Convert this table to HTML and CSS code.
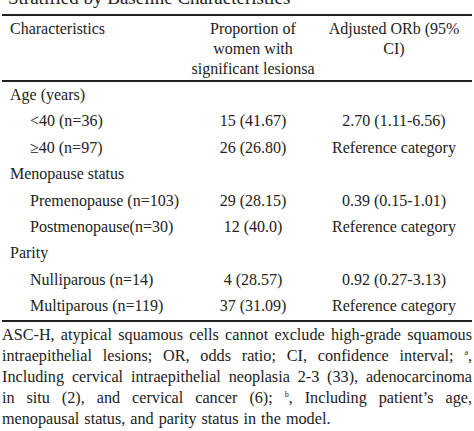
FILE: index.html
```html
<!DOCTYPE html>
<html>
<head>
<meta charset="utf-8">
<link rel="stylesheet" href="styles.css">
</head>
<body>
<div class="page">
  <div class="title">Stratified by Baseline Characteristics</div>
  <table class="tbl">
    <thead>
      <tr>
        <th class="c1">Characteristics</th>
        <th class="c2">Proportion of<br>women with<br>significant lesionsa</th>
        <th class="c3">Adjusted ORb (95%<br>CI)</th>
      </tr>
    </thead>
    <tbody>
      <tr><td class="c1">Age (years)</td><td></td><td></td></tr>
      <tr><td class="c1 ind">&lt;40 (n=36)</td><td class="c2">15 (41.67)</td><td class="c3">2.70 (1.11-6.56)</td></tr>
      <tr><td class="c1 ind">≥40 (n=97)</td><td class="c2">26 (26.80)</td><td class="c3">Reference category</td></tr>
      <tr><td class="c1">Menopause status</td><td></td><td></td></tr>
      <tr><td class="c1 ind">Premenopause (n=103)</td><td class="c2">29 (28.15)</td><td class="c3">0.39 (0.15-1.01)</td></tr>
      <tr><td class="c1 ind">Postmenopause(n=30)</td><td class="c2">12 (40.0)</td><td class="c3">Reference category</td></tr>
      <tr><td class="c1">Parity</td><td></td><td></td></tr>
      <tr><td class="c1 ind">Nulliparous (n=14)</td><td class="c2">4 (28.57)</td><td class="c3">0.92 (0.27-3.13)</td></tr>
      <tr><td class="c1 ind">Multiparous (n=119)</td><td class="c2">37 (31.09)</td><td class="c3">Reference category</td></tr>
    </tbody>
  </table>
  <p class="note">ASC-H, atypical squamous cells cannot exclude high-grade squamous intraepithelial lesions; OR, odds ratio; CI, confidence interval; <sup>a</sup>, Including cervical intraepithelial neoplasia 2-3 (33), adenocarcinoma in&nbsp;situ (2), and cervical cancer (6); <sup>b</sup>, Including patient’s age, menopausal status, and parity status in the model.</p>
</div>
</body>
</html>
```
FILE: styles.css
```css
html, body {
  margin: 0;
  padding: 0;
  background: #fff;
}
body {
  font-family: "Liberation Serif", "Times New Roman", serif;
  color: #222;
  width: 474px;
  height: 431px;
  overflow: hidden;
}
.page {
  padding: 0 2px;
}
.title {
  font-size: 19px;
  line-height: 20px;
  margin-top: -12px;
  padding-left: 6px;
  height: 26px;
  white-space: nowrap;
}
.tbl {
  width: 470px;
  table-layout: fixed;
  border-collapse: collapse;
  font-size: 16px;
  border-top: 2px solid #222;
  border-bottom: 2px solid #222;
}
.tbl th {
  font-weight: normal;
  line-height: 20px;
  padding: 3px 0 1px;
  vertical-align: top;
  border-bottom: 2px solid #222;
  white-space: nowrap;
}
.tbl td {
  line-height: 20.4px;
  padding: 3px 0 3px;
  white-space: nowrap;
}
.c1 {
  text-align: left;
  padding-left: 8px !important;
  width: 180px;
}
.c1.ind {
  padding-left: 28px !important;
}
.c2 {
  text-align: center;
  width: 126px;
}
.c3 {
  text-align: center;
}
.note {
  margin: 3px 0 0;
  font-size: 16.2px;
  line-height: 21px;
  word-spacing: 1px;
  text-align: justify;
}
.note sup {
  font-size: 8px;
  vertical-align: 6px;
  line-height: 0;
}
```
